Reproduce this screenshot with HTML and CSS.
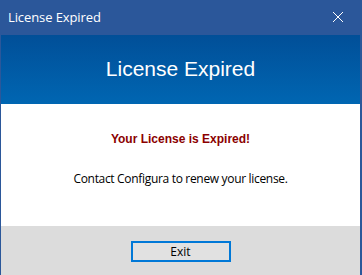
FILE: index.html
```html
<!DOCTYPE html>
<html>
<head>
<meta charset="utf-8">
<link rel="stylesheet" href="styles.css">
</head>
<body>
<div class="window">
  <div class="titlebar">
    <span class="title">License Expired</span>
    <svg class="close" width="12" height="12" viewBox="0 0 12 12"><path d="M1 1 L11 11 M11 1 L1 11" stroke="#fff" stroke-width="1" fill="none"/></svg>
  </div>
  <div class="frame">
    <div class="header">License Expired</div>
    <div class="content">
      <p class="warn">Your License is Expired!</p>
      <p class="msg">Contact Configura to renew your license.</p>
    </div>
    <div class="footer">
      <button class="btn">Exit</button>
    </div>
  </div>
</div>
</body>
</html>
```
FILE: styles.css
```css
html, body { margin: 0; padding: 0; }
body { width: 362px; height: 275px; overflow: hidden; background: #fff; }
.window { width: 362px; height: 275px; display: flex; flex-direction: column; }
.titlebar {
  height: 35px; background: #2b579a; display: flex; align-items: center;
  justify-content: space-between; padding: 0 18px 0 8px; box-sizing: border-box;
  flex-shrink: 0;
}
.title { color: #fff; font-family: "Open Sans", sans-serif; font-size: 13px; letter-spacing: -0.1px; margin-top: -1px; }
.close { display: block; margin-top: -1px; }
.frame {
  flex: 1; display: flex; flex-direction: column;
  border-left: 1px solid #2b579a; border-right: 2px solid #2b579a;
}
.header {
  height: 69px; background: linear-gradient(#014f98, #0066b2);
  color: #fff; font-family: "Liberation Sans", Arial, sans-serif; font-size: 21px;
  display: flex; align-items: center; justify-content: center; padding-bottom: 1px; box-sizing: border-box;
}
.content {
  height: 122px; background: #fff; display: flex; flex-direction: column; align-items: center;
}
.warn {
  margin: 28px 0 0; color: #8b0000; font-family: "Liberation Sans", Arial, sans-serif;
  font-weight: bold; font-size: 12px; line-height: 14px;
}
.msg {
  margin: 25px 0 0; color: #000; font-family: "Open Sans", sans-serif; font-size: 12px; line-height: 16px; letter-spacing: -0.32px;
}
.footer {
  flex: 1; background: #dcdcdc; display: flex; justify-content: center; align-items: flex-start;
}
.btn {
  margin-top: 15px; width: 100px; height: 21px; box-sizing: border-box;
  border: 2px solid #0078d7; background: #e1e1e1; padding: 0;
  font-family: "Open Sans", sans-serif; font-size: 12px; color: #000;
}
```
